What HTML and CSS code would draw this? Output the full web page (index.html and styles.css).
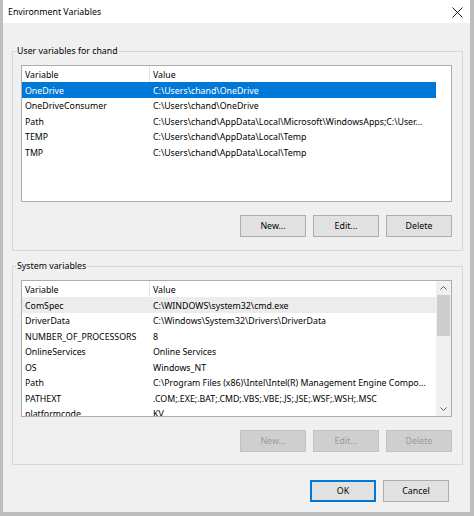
FILE: index.html
```html
<!DOCTYPE html>
<html>
<head>
<meta charset="utf-8">
<title>Environment Variables</title>
<link rel="stylesheet" href="styles.css">
</head>
<body>
<div class="window">
  <div class="titlebar">
    <span class="title">Environment Variables</span>
    <svg class="close" width="11" height="11" viewBox="0 0 11 11"><path d="M0.5 0.5 L10.5 10.5 M10.5 0.5 L0.5 10.5" stroke="#1a1a1a" stroke-width="1" fill="none"/></svg>
  </div>
  <div class="content">
    <fieldset class="group">
      <legend>User variables for chand</legend>
      <div class="group-body">
        <div class="list">
          <div class="list-main">
            <div class="row header"><div class="cell col1">Variable</div><div class="cell">Value</div></div>
            <div class="row selected"><div class="cell col1">OneDrive</div><div class="cell">C:\Users\chand\OneDrive</div></div>
            <div class="row"><div class="cell col1">OneDriveConsumer</div><div class="cell">C:\Users\chand\OneDrive</div></div>
            <div class="row"><div class="cell col1">Path</div><div class="cell">C:\Users\chand\AppData\Local\Microsoft\WindowsApps;C:\User...</div></div>
            <div class="row"><div class="cell col1">TEMP</div><div class="cell">C:\Users\chand\AppData\Local\Temp</div></div>
            <div class="row"><div class="cell col1">TMP</div><div class="cell">C:\Users\chand\AppData\Local\Temp</div></div>
          </div>
          <div class="list-side"></div>
        </div>
        <div class="buttons">
          <button class="btn">New...</button>
          <button class="btn">Edit...</button>
          <button class="btn">Delete</button>
        </div>
      </div>
    </fieldset>
    <fieldset class="group group2">
      <legend>System variables</legend>
      <div class="group-body body2">
        <div class="list">
          <div class="list-main">
            <div class="row header"><div class="cell col1">Variable</div><div class="cell">Value</div></div>
            <div class="row hover"><div class="cell col1">ComSpec</div><div class="cell">C:\WINDOWS\system32\cmd.exe</div></div>
            <div class="row"><div class="cell col1">DriverData</div><div class="cell">C:\Windows\System32\Drivers\DriverData</div></div>
            <div class="row"><div class="cell col1">NUMBER_OF_PROCESSORS</div><div class="cell">8</div></div>
            <div class="row"><div class="cell col1">OnlineServices</div><div class="cell">Online Services</div></div>
            <div class="row"><div class="cell col1">OS</div><div class="cell">Windows_NT</div></div>
            <div class="row"><div class="cell col1">Path</div><div class="cell">C:\Program Files (x86)\Intel\Intel(R) Management Engine Compo...</div></div>
            <div class="row"><div class="cell col1">PATHEXT</div><div class="cell">.COM;.EXE;.BAT;.CMD;.VBS;.VBE;.JS;.JSE;.WSF;.WSH;.MSC</div></div>
            <div class="row"><div class="cell col1">platformcode</div><div class="cell">KV</div></div>
          </div>
          <div class="scrollbar">
            <div class="arrow"><svg width="7" height="4" viewBox="0 0 7 4"><path d="M0.5 3.5 L3.5 0.5 L6.5 3.5" stroke="#606060" fill="none"/></svg></div>
            <div class="track"><div class="thumb"></div></div>
            <div class="arrow"><svg width="7" height="4" viewBox="0 0 7 4"><path d="M0.5 0.5 L3.5 3.5 L6.5 0.5" stroke="#606060" fill="none"/></svg></div>
          </div>
        </div>
        <div class="buttons">
          <button class="btn" disabled>New...</button>
          <button class="btn" disabled>Edit...</button>
          <button class="btn" disabled>Delete</button>
        </div>
      </div>
    </fieldset>
    <div class="dialog-buttons">
      <button class="btn default">OK</button>
      <button class="btn">Cancel</button>
    </div>
  </div>
</div>
</body>
</html>
```
FILE: styles.css
```css
html, body {
  margin: 0;
  padding: 0;
}
body {
  background: #bdbdbd;
  width: 474px;
  height: 516px;
  overflow: hidden;
  font-family: "Noto Sans", "Open Sans", sans-serif;
  font-size: 8.8px;
  color: #000;
}
.window {
  width: 467px;
  height: 512px;
  margin-left: 3px;
  background: #f0f0f0;
  display: flex;
  flex-direction: column;
}
.titlebar {
  height: 23px;
  background: #fff;
  display: flex;
  align-items: center;
  justify-content: space-between;
  padding: 0 7px 0 5px;
  flex-shrink: 0;
}
.title {
  font-size: 8.8px;
  line-height: 12px;
  padding-top: 1px;
}
.close {
  display: block;
  margin-top: 1px;
}
.content {
  padding: 0 7px 0 9px;
  display: flex;
  flex-direction: column;
}
.group {
  margin: 21px 0 0 0;
  padding: 0;
  border: 1px solid #d7d7d7;
  min-width: 0;
}
.group2 {
  margin-top: 8px;
}
.group legend {
  margin-left: 3px;
  padding: 0 1px;
  line-height: 14px;
  font-size: 8.8px;
}
.group-body {
  padding: 7px 10px 13px 8px;
}
.body2 {
  padding-bottom: 12px;
}
.list {
  height: 137px;
  box-sizing: border-box;
  border: 1px solid #adadad;
  background: #fff;
  display: flex;
  overflow: hidden;
}
.list-main {
  width: 415px;
  overflow: hidden;
}
.list-side {
  width: 15px;
}
.row {
  display: grid;
  grid-template-columns: 128px 1fr;
  height: 15.5px;
  white-space: nowrap;
}
.row.header {
  height: 16px;
}
.header .col1 {
  border-right: 1px solid #e5e5e5;
}
.cell {
  padding: 1.5px 0 0 3px;
  overflow: hidden;
  line-height: 14px;
}
.header .cell {
  padding-top: 2px;
}
.selected {
  background: #0078d7;
  color: #fff;
}
.hover {
  background: #ececec;
}
.scrollbar {
  width: 15px;
  background: #f0f0f0;
  display: flex;
  flex-direction: column;
}
.arrow {
  height: 14px;
  display: flex;
  align-items: center;
  justify-content: center;
}
.arrow svg {
  display: block;
}
.track {
  flex: 1;
  padding: 0 1px;
}
.thumb {
  height: 41px;
  background: #cdcdcd;
}
.buttons {
  display: flex;
  justify-content: flex-end;
  gap: 7px;
  margin-top: 13px;
}
.btn {
  width: 66px;
  height: 22px;
  box-sizing: border-box;
  margin: 0;
  padding: 0;
  border: 1px solid #adadad;
  background: #e1e1e1;
  font-family: "Noto Sans", "Open Sans", sans-serif;
  font-size: 8.8px;
  color: #000;
}
.btn:disabled {
  background: #cfcfcf;
  border-color: #c2c2c2;
  color: #9a9a9a;
}
.btn.default {
  border: 1px solid #0078d7;
  box-shadow: inset 0 0 0 1px #0078d7;
}
.dialog-buttons {
  display: flex;
  justify-content: flex-end;
  gap: 7px;
  margin-top: 15px;
  padding-right: 14px;
}
```
